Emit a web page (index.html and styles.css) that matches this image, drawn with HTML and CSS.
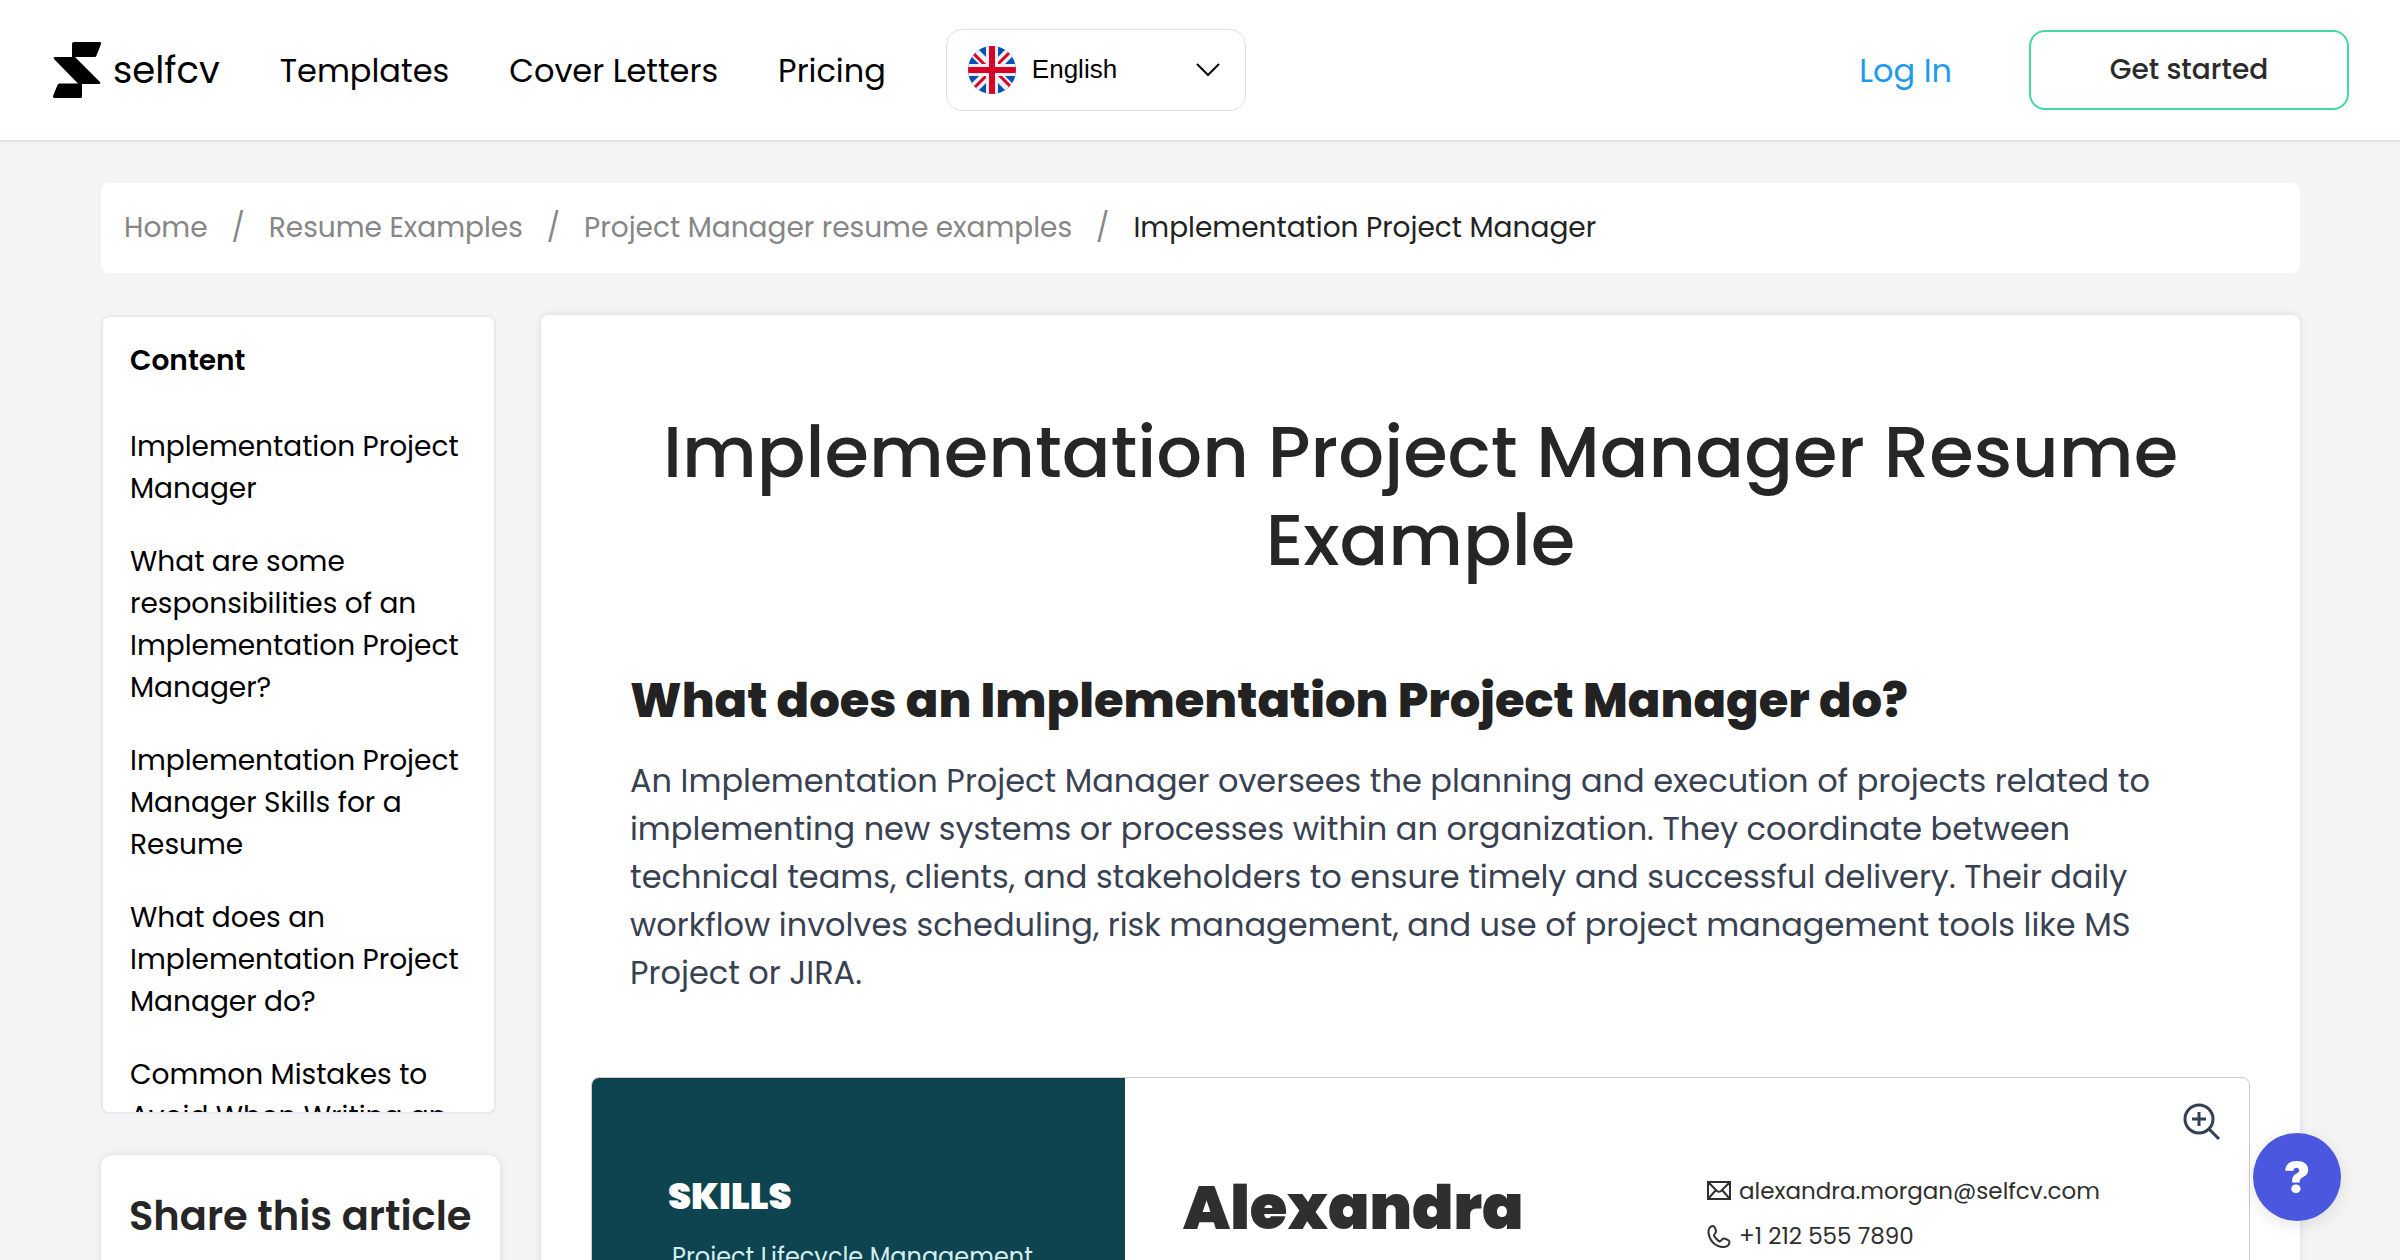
FILE: index.html
```html
<!DOCTYPE html>
<html lang="en">
<head>
    <meta charset="UTF-8">
    <meta name="viewport" content="width=device-width, initial-scale=1.0">
    <title>Implementation Project Manager Resume Example</title>
    <link rel="stylesheet" href="styles.css">
</head>
<body>
    <header class="header">
        <a class="logo" href="#">
            <svg class="logo-mark" viewBox="0 0 48 56" aria-hidden="true">
                <path d="M21 0h25.500q2 0 1.500 2l-4.500 11.500q-.500 1.500-2 1.500H22l25 25q1 2-1 2H29v12.500q0 1.500-1.500 1.500H1.500Q-.500 56 0 54l4.500-11q.500-1.500 2-1.500H25L1 17q-1-2 1-2h17V2q0-2 2-2z"/>
            </svg>
            <span>selfcv</span>
        </a>
        <nav class="nav">
            <a href="#">Templates</a>
            <a href="#">Cover Letters</a>
            <a href="#">Pricing</a>
        </nav>
        <div class="language">
            <svg class="flag" viewBox="0 0 48 48" aria-hidden="true">
                <clipPath id="round"><circle cx="24" cy="24" r="24"/></clipPath>
                <g clip-path="url(#round)">
                    <path fill="#0052b4" d="M0 0h48v48H0z"/>
                    <path stroke="#f0f0f0" stroke-width="10" d="M0 0l48 48M48 0L0 48"/>
                    <path stroke="#d80027" stroke-width="3" d="M5 7l15 15M43 5L28 20M5 43l15-15M43 41L28 26"/>
                    <path stroke="#f0f0f0" stroke-width="12" d="M24 0v48M0 24h48"/>
                    <path stroke="#d80027" stroke-width="6" d="M24 0v48M0 24h48"/>
                </g>
            </svg>
            <select class="language-select" aria-label="Language">
                <option>English</option>
            </select>
            <svg class="chevron" viewBox="0 0 24 14" aria-hidden="true"><path d="M1 1l11 11L23 1"/></svg>
        </div>
        <a class="login" href="#">Log In</a>
        <button class="get-started" type="button">Get started</button>
    </header>

    <div class="page">
        <nav class="breadcrumbs" aria-label="Breadcrumb">
            <a href="#">Home</a>
            <span class="slash">/</span>
            <a href="#">Resume Examples</a>
            <span class="slash">/</span>
            <a href="#">Project Manager resume examples</a>
            <span class="slash">/</span>
            <span class="current">Implementation Project Manager</span>
        </nav>

        <div class="columns">
            <aside class="sidebar">
                <nav class="contents">
                    <h2>Content</h2>
                    <a href="#">Implementation Project Manager</a>
                    <a href="#">What are some responsibilities of an Implementation Project Manager?</a>
                    <a href="#">Implementation Project Manager Skills for a Resume</a>
                    <a href="#">What does an Implementation Project Manager do?</a>
                    <a href="#">Common Mistakes to Avoid When Writing an</a>
                </nav>
                <section class="share">
                    <h2>Share this article</h2>
                </section>
            </aside>

            <main class="article">
                <h1>Implementation Project Manager Resume Example</h1>
                <h2>What does an Implementation Project Manager do?</h2>
                <p>An Implementation Project Manager oversees the planning and execution of projects related to implementing new systems or processes within an organization. They coordinate between technical teams, clients, and stakeholders to ensure timely and successful delivery. Their daily workflow involves scheduling, risk management, and use of project management tools like MS Project or JIRA.</p>

                <div class="resume">
                    <div class="resume-side">
                        <h3>SKILLS</h3>
                        <p>Project Lifecycle Management</p>
                    </div>
                    <div class="resume-main">
                        <div class="resume-name">Alexandra</div>
                        <ul class="resume-contact">
                            <li>
                                <svg viewBox="0 0 24 24" aria-hidden="true"><path d="M1 2h22v17H1zM1 2l9 9q2 1.500 4 0l9-9M1 19l8-9M23 19l-8-9"/></svg>
                                alexandra.morgan@selfcv.com
                            </li>
                            <li>
                                <svg viewBox="0 0 24 24" aria-hidden="true"><path d="M6 1C3 1 1 4 1.500 8c1 7 6 14 15 14 4 0 6-2 6-5.500 0-1-4-3-6-3-1.500 0-2 2.500-4 3-1-.500-5-4-5.500-6C7 9 9 8 9 6.500 9 4 7 1 6 1z"/></svg>
                                +1 212 555 7890
                            </li>
                        </ul>
                    </div>
                    <button class="zoom" type="button" aria-label="Zoom in">
                        <svg viewBox="0 0 36 36" aria-hidden="true"><path d="M25 25l10 10M15 8v14M8 15h14"/><circle cx="15" cy="15" r="14"/></svg>
                    </button>
                </div>
            </main>
        </div>
    </div>

    <button class="help" type="button" aria-label="Help">?</button>
</body>
</html>
```
FILE: styles.css
```css
* {
    box-sizing: border-box;
}
body {
    margin: 0;
    height: 100vh;
    overflow: hidden;
    font-family: Poppins, Inter, sans-serif;
    font-size: 32px;
    color: #000;
    background-color: #f4f4f4;
}
a {
    color: inherit;
    text-decoration: none;
}
h1, h2, h3, p, ul {
    margin: 0;
    padding: 0;
}
button {
    font-family: inherit;
    cursor: pointer;
}
/* Header */
.header {
    display: flex;
    align-items: center;
    padding: 29px 51px 29px 53px;
    background-color: #fff;
    border-bottom: 2px solid #dde4ea;
}
.logo {
    display: flex;
    align-items: center;
    gap: 12px;
    font-size: 37px;
}
.logo-mark {
    width: 48px;
    height: 56px;
}
.nav {
    display: flex;
    gap: 60px;
    margin: 0 60px;
    padding-top: 2px;
}
.language {
    display: flex;
    align-items: center;
    position: relative;
    width: 300px;
    height: 82px;
    border: 1px solid #e0e0e0;
    border-radius: 16px;
}
.flag {
    position: absolute;
    left: 21px;
    width: 48px;
    height: 48px;
    pointer-events: none;
}
.chevron {
    position: absolute;
    right: 25px;
    width: 24px;
    height: 14px;
    fill: none;
    stroke: #000;
    stroke-width: 2;
    pointer-events: none;
}
.language-select {
    appearance: none;
    width: 100%;
    height: 100%;
    padding: 0 60px 2px 85px;
    font-family: "Liberation Sans", Arial, sans-serif;
    font-size: 26px;
    color: #000;
    background: none;
    border: 0;
}
.login {
    margin-left: auto;
    padding-top: 2px;
    margin-right: 77px;
    color: #1d9bf0;
}
.get-started {
    width: 320px;
    height: 80px;
    font-size: 28px;
    font-weight: 500;
    color: #2b2b2b;
    background-color: #fff;
    border: 2px solid #48d6a8;
    border-radius: 16px;
}
/* Page */
.page {
    padding: 41px 100px 0 101px;
}
.breadcrumbs {
    display: flex;
    align-items: center;
    gap: 24px;
    height: 90px;
    padding: 0 23px;
    font-size: 28px;
    color: #868686;
    background-color: #fff;
    border-radius: 8px;
}
.current {
    color: #222;
}
.columns {
    display: flex;
    align-items: flex-start;
    gap: 41px;
    margin-top: 42px;
}
.sidebar {
    flex: 0 0 399px;
}
.contents {
    display: flex;
    flex-direction: column;
    gap: 31px;
    height: 799px;
    margin-right: 4px;
    padding: 23px 27px 0;
    overflow: hidden;
    font-size: 28px;
    line-height: 42px;
    background-color: #fff;
    border: 2px solid #e8eaee;
    border-radius: 8px;
}
.contents h2 {
    margin-bottom: 13px;
    font-size: 28px;
    font-weight: 600;
}
.share {
    margin-top: 41px;
    padding: 29px 28px;
    background-color: #fff;
    border-radius: 12px;
    box-shadow: 0 0 6px #d5dae2;
}
.share h2 {
    font-size: 40px;
    font-weight: 600;
    line-height: 64px;
    color: #262626;
}
.article {
    flex: 1;
    padding: 93px 50px 0;
    background-color: #fff;
    border-radius: 8px;
    box-shadow: 0 0 6px #d0d7e0;
}
.article h1 {
    padding: 0 40px;
    font-size: 72px;
    font-weight: 500;
    line-height: 88px;
    text-align: center;
    color: #262626;
}
.article h2 {
    margin: 81px 39px 20px;
    font-size: 48px;
    font-weight: 800;
    line-height: 72px;
    color: #222;
}
.article > p {
    margin: 0 39px 80px;
    line-height: 48px;
    color: #374151;
}
/* Resume preview */
.resume {
    display: flex;
    position: relative;
    min-height: 600px;
    overflow: hidden;
    border: 1px solid #ccc;
    border-radius: 8px;
}
.resume-side {
    flex: 0 0 533px;
    padding: 91px 76px;
    color: #fff;
    background-color: #0d444f;
}
.resume-side h3 {
    font-size: 37px;
    font-weight: 900;
    line-height: 54px;
}
.resume-side p {
    padding: 16px 4px;
    font-size: 24px;
    color: #d5edf0;
}
.resume-main {
    display: flex;
    flex: 1;
    padding: 91px 58px;
    color: #2f2f2f;
}
.resume-name {
    flex: 0 0 524px;
    font-size: 61px;
    font-weight: 900;
    line-height: 78px;
}
.resume-contact {
    list-style: none;
    font-size: 23px;
    line-height: 45px;
}
.resume-contact li {
    display: flex;
    align-items: center;
    gap: 8px;
}
.resume-contact svg {
    width: 24px;
    height: 24px;
    fill: none;
    stroke: #2f2f2f;
    stroke-width: 2;
}
.zoom {
    position: absolute;
    top: 26px;
    right: 29px;
    padding: 0;
    background: none;
    border: 0;
}
.zoom svg {
    display: block;
    width: 36px;
    height: 36px;
    overflow: visible;
    fill: none;
    stroke: #334155;
    stroke-width: 3;
}
.help {
    position: fixed;
    right: 59px;
    bottom: 39px;
    width: 88px;
    height: 88px;
    font-family: Inter, sans-serif;
    font-size: 44px;
    font-weight: 900;
    color: #fff;
    background-color: #4a57de;
    border: 0;
    border-radius: 50%;
    box-shadow: 0 4px 16px rgba(0, 0, 0, 0.1);
}
```
